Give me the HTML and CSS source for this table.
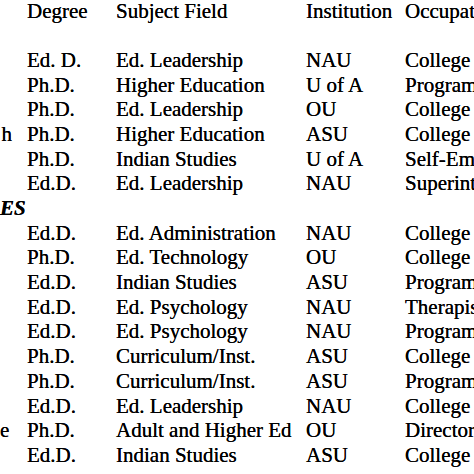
FILE: index.html
```html
<!DOCTYPE html>
<html>
<head>
<meta charset="utf-8">
<link rel="stylesheet" href="styles.css">
</head>
<body>
<div class="table">
  <div class="row head"><span class="lead"></span><span>Degree</span><span>Subject Field</span><span>Institution</span><span>Occupation</span></div>
  <div class="row blank"></div>
  <div class="row"><span class="lead"></span><span>Ed. D.</span><span>Ed. Leadership</span><span>NAU</span><span>College President</span></div>
  <div class="row"><span class="lead"></span><span>Ph.D.</span><span>Higher Education</span><span>U of A</span><span>Program Director</span></div>
  <div class="row"><span class="lead"></span><span>Ph.D.</span><span>Ed. Leadership</span><span>OU</span><span>College President</span></div>
  <div class="row"><span class="lead lead-h">h</span><span>Ph.D.</span><span>Higher Education</span><span>ASU</span><span>College Dean</span></div>
  <div class="row"><span class="lead"></span><span>Ph.D.</span><span>Indian Studies</span><span>U of A</span><span>Self-Employed</span></div>
  <div class="row"><span class="lead"></span><span>Ed.D.</span><span>Ed. Leadership</span><span>NAU</span><span>Superintendent</span></div>
  <div class="row"><span class="lead lead-es">ES</span><span></span><span></span><span></span><span></span></div>
  <div class="row"><span class="lead"></span><span>Ed.D.</span><span>Ed. Administration</span><span>NAU</span><span>College President</span></div>
  <div class="row"><span class="lead"></span><span>Ph.D.</span><span>Ed. Technology</span><span>OU</span><span>College Administrator</span></div>
  <div class="row"><span class="lead"></span><span>Ed.D.</span><span>Indian Studies</span><span>ASU</span><span>Program Director</span></div>
  <div class="row"><span class="lead"></span><span>Ed.D.</span><span>Ed. Psychology</span><span>NAU</span><span>Therapist</span></div>
  <div class="row"><span class="lead"></span><span>Ed.D.</span><span>Ed. Psychology</span><span>NAU</span><span>Program Director</span></div>
  <div class="row"><span class="lead"></span><span>Ph.D.</span><span>Curriculum/Inst.</span><span>ASU</span><span>College Dean</span></div>
  <div class="row"><span class="lead"></span><span>Ph.D.</span><span>Curriculum/Inst.</span><span>ASU</span><span>Program Director</span></div>
  <div class="row"><span class="lead"></span><span>Ed.D.</span><span>Ed. Leadership</span><span>NAU</span><span>College President</span></div>
  <div class="row"><span class="lead lead-e">e</span><span>Ph.D.</span><span>Adult and Higher Ed</span><span>OU</span><span>Director</span></div>
  <div class="row"><span class="lead"></span><span>Ed.D.</span><span>Indian Studies</span><span>ASU</span><span>College President</span></div>
</div>
</body>
</html>
```
FILE: styles.css
```css
html, body {
  margin: 0;
  padding: 0;
  background: #ffffff;
  overflow: hidden;
}
.table {
  width: 474px;
  height: 474px;
  overflow: hidden;
  margin-top: -1.5px;
  font-family: "Liberation Serif", "Times New Roman", serif;
  font-size: 21px;
  color: #000;
  text-shadow: 0 0 0.4px #000;
}
.row {
  display: grid;
  grid-template-columns: 27px 89px 190px 99px 200px;
  height: 24.7px;
  line-height: 24.7px;
  white-space: nowrap;
}
.row span {
  overflow: visible;
}
.lead {
  text-align: right;
}
.lead-h { padding-right: 15px; }
.lead-es { padding-right: 9px; font-weight: bold; font-style: italic; }
.lead-e { padding-right: 19px; }
```
